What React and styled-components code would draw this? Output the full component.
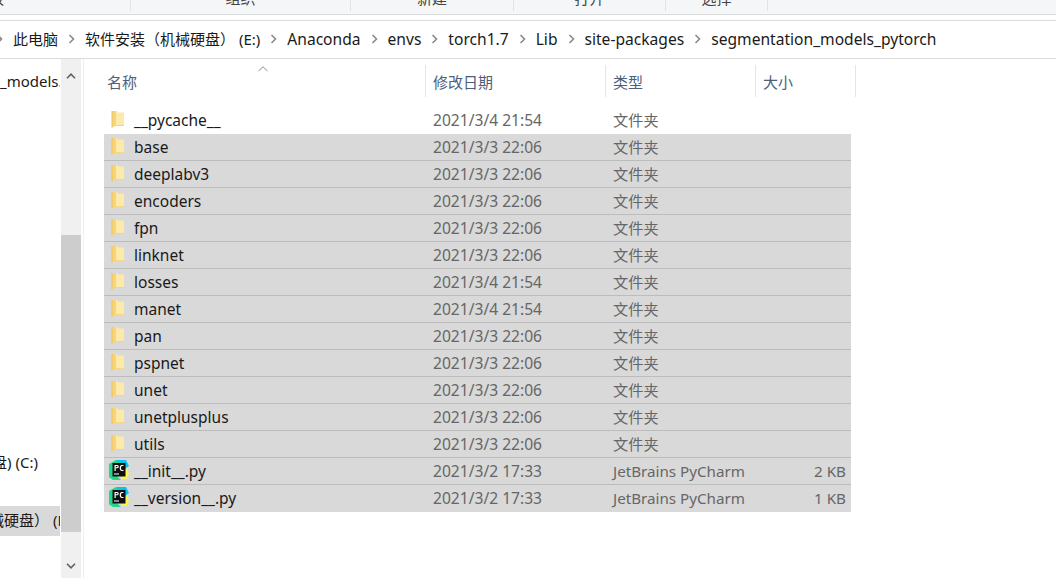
import React from 'react';
import styled, { createGlobalStyle } from 'styled-components';

const GlobalStyle = createGlobalStyle`
  html, body {
    margin: 0;
    padding: 0;
    background: #fff;
    overflow: hidden;
  }
  body {
    font-family: "Noto Sans", "Noto Sans CJK SC", sans-serif;
  }
`;

const groups = [
  { label: '贴板', cell: 131, align: 'left', indent: -26 },
  { label: '组织', cell: 220 },
  { label: '新建', cell: 163 },
  { label: '打开', cell: 152 },
  { label: '选择', cell: 102 },
];

const crumbs = [
  { text: '此电脑', cjk: true },
  { text: '软件安装（机械硬盘） (E:)', cjk: true },
  { text: 'Anaconda' },
  { text: 'envs' },
  { text: 'torch1.7' },
  { text: 'Lib' },
  { text: 'site-packages' },
  { text: 'segmentation_models_pytorch' },
];

const files = [
  { name: '__pycache__', date: '2021/3/4 21:54', type: '文件夹' },
  { name: 'base', date: '2021/3/3 22:06', type: '文件夹', selected: true },
  { name: 'deeplabv3', date: '2021/3/3 22:06', type: '文件夹', selected: true },
  { name: 'encoders', date: '2021/3/3 22:06', type: '文件夹', selected: true },
  { name: 'fpn', date: '2021/3/3 22:06', type: '文件夹', selected: true },
  { name: 'linknet', date: '2021/3/3 22:06', type: '文件夹', selected: true },
  { name: 'losses', date: '2021/3/4 21:54', type: '文件夹', selected: true },
  { name: 'manet', date: '2021/3/4 21:54', type: '文件夹', selected: true },
  { name: 'pan', date: '2021/3/3 22:06', type: '文件夹', selected: true },
  { name: 'pspnet', date: '2021/3/3 22:06', type: '文件夹', selected: true },
  { name: 'unet', date: '2021/3/3 22:06', type: '文件夹', selected: true },
  { name: 'unetplusplus', date: '2021/3/3 22:06', type: '文件夹', selected: true },
  { name: 'utils', date: '2021/3/3 22:06', type: '文件夹', selected: true },
  { name: '__init__.py', date: '2021/3/2 17:33', type: 'JetBrains PyCharm', size: '2 KB', py: true, selected: true },
  { name: '__version__.py', date: '2021/3/2 17:33', type: 'JetBrains PyCharm', size: '1 KB', py: true, selected: true },
];

const Page = styled.div`
  width: 1056px;
  height: 578px;
  display: flex;
  flex-direction: column;
  overflow: hidden;
  background: #fff;
`;

const Ribbon = styled.div`
  height: 15px;
  box-sizing: border-box;
  flex: none;
  display: flex;
  align-items: flex-start;
  background: #f5f6f7;
  border-bottom: 1px solid #dadbdc;
  overflow: hidden;
`;

const RibbonGroup = styled.div`
  width: ${p => p.$w}px;
  height: 11px;
  flex: none;
  box-sizing: border-box;
  border-right: 1px solid #e1e3e6;
  font-size: 15px;
  line-height: 20px;
  color: #444;
  text-align: ${p => p.$align || 'center'};
  text-indent: ${p => p.$indent || 0}px;
  span {
    display: block;
    margin-top: -12px;
  }
`;

const AddressBar = styled.div`
  margin-top: 5px;
  height: 39px;
  flex: none;
  box-sizing: border-box;
  border-top: 1px solid #dcdcdc;
  border-bottom: 1px solid #dcdcdc;
  padding-bottom: 2px;
  display: flex;
  align-items: center;
  color: #1a1a1a;
  white-space: nowrap;
  overflow: hidden;
`;

const Crumb = styled.span`
  font-size: ${p => (p.$cjk ? 15 : 15.6)}px;
`;

const Chevron = styled.svg`
  width: 7px;
  height: 10px;
  flex: none;
  margin: 0 10px;
`;

const LeadChevron = styled(Chevron)`
  margin-left: -4px;
  margin-right: 10px;
`;

const Body = styled.div`
  flex: 1;
  display: flex;
  min-height: 0;
`;

const NavPane = styled.div`
  width: 60px;
  flex: none;
  position: relative;
  overflow: hidden;
  font-size: 15px;
  color: #1a1a1a;
  white-space: nowrap;
`;

const NavLine = styled.div`
  position: absolute;
  top: ${p => p.$top}px;
  left: ${p => p.$left}px;
  line-height: 20px;
`;

const NavSelected = styled.div`
  position: absolute;
  left: 0;
  top: 447px;
  width: 60px;
  height: 30px;
  background: #d9d9d9;
  line-height: 29px;
  overflow: hidden;
  text-indent: -11px;
`;

const Scrollbar = styled.div`
  width: 20px;
  margin-left: 1px;
  flex: none;
  display: flex;
  flex-direction: column;
  background: #f0f0f0;
`;

const ScrollButton = styled.div`
  height: 20px;
  flex: none;
  display: flex;
  align-items: center;
  justify-content: center;
  margin-top: ${p => p.$mt || 0}px;
  margin-bottom: ${p => p.$mb || 0}px;
`;

const ScrollThumb = styled.div`
  flex: 1;
  margin-top: 149px;
  margin-bottom: 24px;
  background: #cdcdcd;
`;

const Divider = styled.div`
  width: 1px;
  margin-left: 2px;
  flex: none;
  background: #f0f0f0;
`;

const ListPane = styled.div`
  flex: 1;
  display: flex;
  flex-direction: column;
  padding-left: 20px;
  min-width: 0;
`;

const HeaderRow = styled.div`
  height: 32px;
  margin-top: 6px;
  flex: none;
  display: flex;
  position: relative;
  font-size: 15px;
  color: #4c607a;
`;

const SortArrow = styled.svg`
  position: absolute;
  left: 154px;
  top: 1px;
  width: 10px;
  height: 6px;
`;

const HeaderCell = styled.div`
  width: ${p => p.$w}px;
  flex: none;
  box-sizing: border-box;
  padding-left: ${p => p.$pl}px;
  line-height: 34px;
  border-right: 1px solid #e5e5e5;
`;

const Rows = styled.div`
  margin-top: 10px;
  display: flex;
  flex-direction: column;
  width: 747px;
`;

const Row = styled.div`
  height: 27px;
  flex: none;
  box-sizing: border-box;
  display: flex;
  align-items: center;
  background: ${p => (p.$selected ? '#d9d9d9' : 'transparent')};
  border-bottom: 1px solid ${p => (p.$selected && !p.$last ? '#bcbcbc' : 'transparent')};
`;

const IconSlot = styled.div`
  width: 30px;
  flex: none;
  display: flex;
  justify-content: center;
  margin-top: -2px;
  padding-right: ${p => (p.$py ? 1 : 3)}px;
  box-sizing: border-box;
`;

const NameCell = styled.div`
  width: 299px;
  flex: none;
  color: #1a1a1a;
  font-size: 15.5px;
`;

const DateCell = styled.div`
  width: 180px;
  flex: none;
  color: #666;
  font-size: 15.6px;
`;

const TypeCell = styled.div`
  width: 150px;
  flex: none;
  color: #666;
  font-size: 15.2px;
  margin-top: ${p => (p.$latin ? 0 : -2)}px;
`;

const SizeCell = styled.div`
  width: 83px;
  flex: none;
  text-align: right;
  color: #666;
  font-size: 15.2px;
`;

const FolderIcon = () => (
  <svg width="14" height="18" viewBox="0 0 14 18">
    <path d="M4 1h2l1 1.500h6V15H4z" fill="#fdeaa8" />
    <path d="M1 1h4v14.500l-4 2z" fill="#f6d478" />
    <path d="M1 1v16.500" stroke="#e9c060" strokeWidth="1" />
    <path d="M5 15.500H13" stroke="#f4d67e" strokeWidth="1" />
  </svg>
);

const PyCharmIcon = () => (
  <svg width="20" height="20" viewBox="0 0 20 20">
    <path d="M0 4 7 0h6v4L4 19l-4-2z" fill="#21d789" />
    <path d="M8 0h9l3 6-4 3z" fill="#07c3f2" />
    <path d="M12 19l6-11 2 6-3 5z" fill="#fcf84a" />
    <path d="M3 11 0 17l4 3h8z" fill="#21d789" />
    <rect x="3.500" y="3" width="13" height="13.500" fill="#0f0f0f" />
    <rect x="5" y="13.500" width="5" height="1" fill="#fff" />
    <path d="M5.500 5h2.700a1.500 1.500 0 0 1 0 3.200H6.700V11H5.500zM6.700 6v1.200h1.300a.6.6 0 0 0 0-1.200z" fill="#fff" />
    <path d="M14.500 6h-1.400c-.7 0-1.100.7-1.100 2s.4 2 1.100 2h1.400v1h-1.600c-1.300 0-2.200-1.200-2.200-3s.9-3 2.200-3h1.600z" fill="#fff" />
  </svg>
);

const ChevronGlyph = ({ as: Wrapper = Chevron }) => (
  <Wrapper viewBox="0 0 7 10">
    <path d="M1.500 1 5.500 5l-4 4" fill="none" stroke="#8a8a8a" strokeWidth="1.600" />
  </Wrapper>
);

const ScrollChevron = ({ up }) => (
  <svg width="10" height="6" viewBox="0 0 10 6">
    <path d={up ? 'M1 5.200 5 1.200l4 4' : 'M1 .8l4 4 4-4'} fill="none" stroke="#606060" strokeWidth="1.600" />
  </svg>
);

export default function App() {
  return (
    <Page>
      <GlobalStyle />
      <Ribbon>
        {groups.map(g => (
          <RibbonGroup key={g.label} $w={g.cell} $align={g.align} $indent={g.indent}>
            <span>{g.label}</span>
          </RibbonGroup>
        ))}
      </Ribbon>
      <AddressBar>
        <ChevronGlyph as={LeadChevron} />
        {crumbs.map((c, i) => (
          <React.Fragment key={c.text}>
            {i > 0 && <ChevronGlyph />}
            <Crumb $cjk={c.cjk}>{c.text}</Crumb>
          </React.Fragment>
        ))}
      </AddressBar>
      <Body>
        <NavPane>
          <NavLine $top={12} $left={0}>_models.py</NavLine>
          <NavLine $top={393} $left={-8}>盘) (C:)</NavLine>
          <NavSelected>械硬盘） (E:)</NavSelected>
        </NavPane>
        <Scrollbar>
          <ScrollButton $mt={7}><ScrollChevron up /></ScrollButton>
          <ScrollThumb />
          <ScrollButton $mb={2}><ScrollChevron /></ScrollButton>
        </Scrollbar>
        <Divider />
        <ListPane>
          <HeaderRow>
            <SortArrow viewBox="0 0 10 6">
              <path d="M.5 5 5 .8 9.500 5" fill="none" stroke="#8a8a8a" strokeWidth="1" />
            </SortArrow>
            <HeaderCell $w={322} $pl={3}>名称</HeaderCell>
            <HeaderCell $w={180} $pl={7}>修改日期</HeaderCell>
            <HeaderCell $w={150} $pl={7}>类型</HeaderCell>
            <HeaderCell $w={100} $pl={7}>大小</HeaderCell>
          </HeaderRow>
          <Rows>
            {files.map((f, i) => (
              <Row key={f.name} $selected={f.selected} $last={i === files.length - 1}>
                <IconSlot $py={f.py}>{f.py ? <PyCharmIcon /> : <FolderIcon />}</IconSlot>
                <NameCell>{f.name}</NameCell>
                <DateCell>{f.date}</DateCell>
                <TypeCell $latin={f.py}>{f.type}</TypeCell>
                {f.size && <SizeCell>{f.size}</SizeCell>}
              </Row>
            ))}
          </Rows>
        </ListPane>
      </Body>
    </Page>
  );
}
